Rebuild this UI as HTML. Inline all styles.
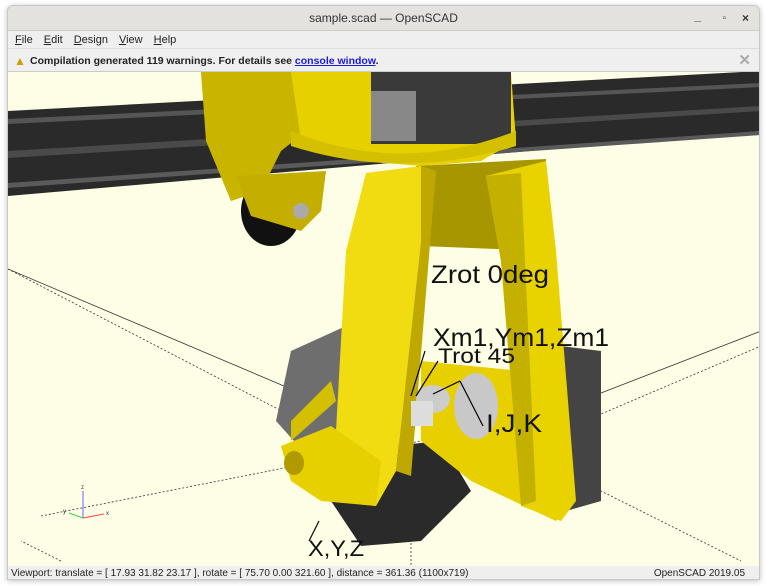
<!DOCTYPE html>
<html><head><meta charset="utf-8"><style>
*{margin:0;padding:0;box-sizing:border-box}
body{width:768px;height:588px;background:#fff;font-family:"Liberation Sans",sans-serif;position:relative;overflow:hidden}
.win{position:absolute;left:7px;top:5px;width:753px;height:575px;background:#efefef;border:1px solid #c8c8c8;border-radius:6px 6px 0 0;box-shadow:0 1px 6px rgba(0,0,0,.25);overflow:hidden}
.title{position:absolute;left:0;top:0;width:100%;height:25px;background:#e4e2de;font-size:12px;color:#333;text-align:center;line-height:25px;border-bottom:1px solid #d0cdc8}
.menu{position:absolute;left:0;top:25px;width:100%;height:18px;background:#efefef;font-size:11px;color:#222;line-height:18px;border-bottom:1px solid #ddd}
.menu span{margin-left:7px;margin-right:4px}
.warn{position:absolute;left:0;top:44px;width:100%;height:22px;background:#efefef;font-size:10.5px;font-weight:bold;color:#222;line-height:22px;padding-left:22px;border-bottom:1px solid #ccc}
.warn a{color:#1a1adc;text-decoration:underline}
.status{position:absolute;left:0;top:560px;width:100%;height:15px;background:#efefef;font-size:10px;color:#222;line-height:15px;padding-left:3px}
svg.v{position:absolute;left:0;top:66px}
</style></head><body>
<div class="win">
<div class="title">sample.scad — OpenSCAD
<span style="position:absolute;right:58px;top:-2px;font-weight:bold">_</span>
<span style="position:absolute;right:33px;top:0;font-size:10px;font-weight:bold">▫</span>
<span style="position:absolute;right:10px;top:0;font-weight:bold">×</span></div>
<div class="menu"><span><u>F</u>ile</span><span><u>E</u>dit</span><span><u>D</u>esign</span><span><u>V</u>iew</span><span><u>H</u>elp</span></div>
<div class="warn"><span style="position:absolute;left:6px;top:0;color:#c9a000;font-size:12px">▲</span>Compilation generated 119 warnings. For details see <a>console window</a>.
<span style="position:absolute;right:8px;top:0;color:#aaa;font-size:15px">✕</span></div>
<svg class="v" width="753" height="494" viewBox="7 71 753 494" xmlns="http://www.w3.org/2000/svg">
<rect x="7" y="71" width="753" height="494" fill="#fefee6"/>
<g stroke="#333" stroke-width="0.8" stroke-dasharray="2,2" fill="none">
<line x1="7" y1="268" x2="300" y2="420"/>
<line x1="40" y1="515" x2="420" y2="440"/>
<line x1="560" y1="430" x2="760" y2="345"/>
<line x1="560" y1="470" x2="740" y2="560"/>
<line x1="410" y1="470" x2="410" y2="565"/>
<line x1="60" y1="560" x2="20" y2="540"/>
</g>
<g stroke="#333" stroke-width="0.8" fill="none"><line x1="7" y1="268" x2="290" y2="388"/><line x1="600" y1="392" x2="760" y2="330"/></g>
<polygon points="7,110 760,70 760,130 7,195" fill="#2a2a2a"/>
<polygon points="7,118 760,82 760,86 7,123" fill="#555"/>
<polygon points="7,150 760,105 760,110 7,157" fill="#4a4a4a"/>
<polygon points="7,182 760,130 760,134 7,187" fill="#5a5a5a"/>
<polygon points="200,71 300,71 330,110 280,150 260,190 230,200 205,140" fill="#c9b400"/>
<polygon points="290,71 510,71 515,140 480,160 420,165 360,160 300,140" fill="#e6d000"/>
<rect x="370" y="71" width="140" height="72" fill="#3a3a3a"/>
<rect x="370" y="90" width="45" height="50" fill="#888"/>
<path d="M290,130 Q400,175 515,130 L515,145 Q400,180 290,145Z" fill="#d4c000"/>
<ellipse cx="270" cy="210" rx="30" ry="35" fill="#111"/>
<polygon points="235,175 325,170 320,210 300,230 250,215" fill="#c4ae00"/>
<circle cx="300" cy="210" r="8" fill="#aaa"/>
<polygon points="290,350 345,325 400,370 380,440 320,470 275,420" fill="#6e6e6e"/>
<polygon points="340,450 440,440 470,490 420,540 360,545 330,500" fill="#2a2a2a"/>
<polygon points="560,345 600,350 600,500 565,510" fill="#444"/>
<polygon points="415,165 545,158 545,250 420,245" fill="#a79600"/>
<polygon points="420,360 520,370 560,380 565,510 555,520 470,480 420,440" fill="#e8d000"/>
<ellipse cx="475" cy="405" rx="22" ry="33" fill="#c8c8c8"/>
<polygon points="485,175 545,160 555,250 575,500 560,520 520,505 500,260" fill="#e8d200"/>
<polygon points="485,175 520,172 535,500 520,505 500,260" fill="#c4b000"/>
<polygon points="365,172 420,165 420,240 395,470 375,505 330,500 335,430 345,250" fill="#f0dc10"/>
<polygon points="420,165 435,170 410,475 395,470 420,240" fill="#bfa900"/>
<polygon points="280,445 330,425 380,460 375,505 320,500 290,480" fill="#e6d000"/>
<ellipse cx="293" cy="462" rx="10" ry="12" fill="#b09a00"/>
<polygon points="290,420 330,380 335,400 290,440" fill="#d4c000"/>
<ellipse cx="432" cy="398" rx="17" ry="14" fill="#ccc"/>
<rect x="410" y="400" width="22" height="25" fill="#ddd"/>
<g stroke="#000" stroke-width="1.2"><line x1="432" y1="393" x2="459" y2="380"/><line x1="459" y1="380" x2="482" y2="425"/><line x1="424" y1="350" x2="410" y2="395"/><line x1="437" y1="360" x2="415" y2="395"/><line x1="318" y1="520" x2="308" y2="540"/></g>
<g font-family="Liberation Sans,sans-serif" fill="#111" font-size="25">
<text x="430" y="282" textLength="118" lengthAdjust="spacingAndGlyphs">Zrot 0deg</text>
<text x="432" y="345" textLength="176" lengthAdjust="spacingAndGlyphs">Xm1,Ym1,Zm1</text>
<text x="437" y="362" font-size="21" textLength="77" lengthAdjust="spacingAndGlyphs">Trot 45</text>
<text x="485" y="431" textLength="56" lengthAdjust="spacingAndGlyphs">I,J,K</text>
<text x="307" y="555" font-size="22" textLength="56" lengthAdjust="spacingAndGlyphs">X,Y,Z</text>
</g>
<g stroke-width="1"><line x1="82" y1="517" x2="82" y2="490" stroke="#66f"/><line x1="82" y1="517" x2="103" y2="513" stroke="#f44"/><line x1="82" y1="517" x2="68" y2="512" stroke="#4c4"/></g>
<g font-size="6" fill="#333" font-family="Liberation Sans"><text x="80" y="488">z</text><text x="105" y="514">x</text><text x="62" y="512">y</text></g>
</svg>
<div class="status">Viewport: translate = [ 17.93 31.82 23.17 ], rotate = [ 75.70 0.00 321.60 ], distance = 361.36 (1100x719)<span style="position:absolute;right:14px">OpenSCAD 2019.05</span></div>
</div>
</body></html>
